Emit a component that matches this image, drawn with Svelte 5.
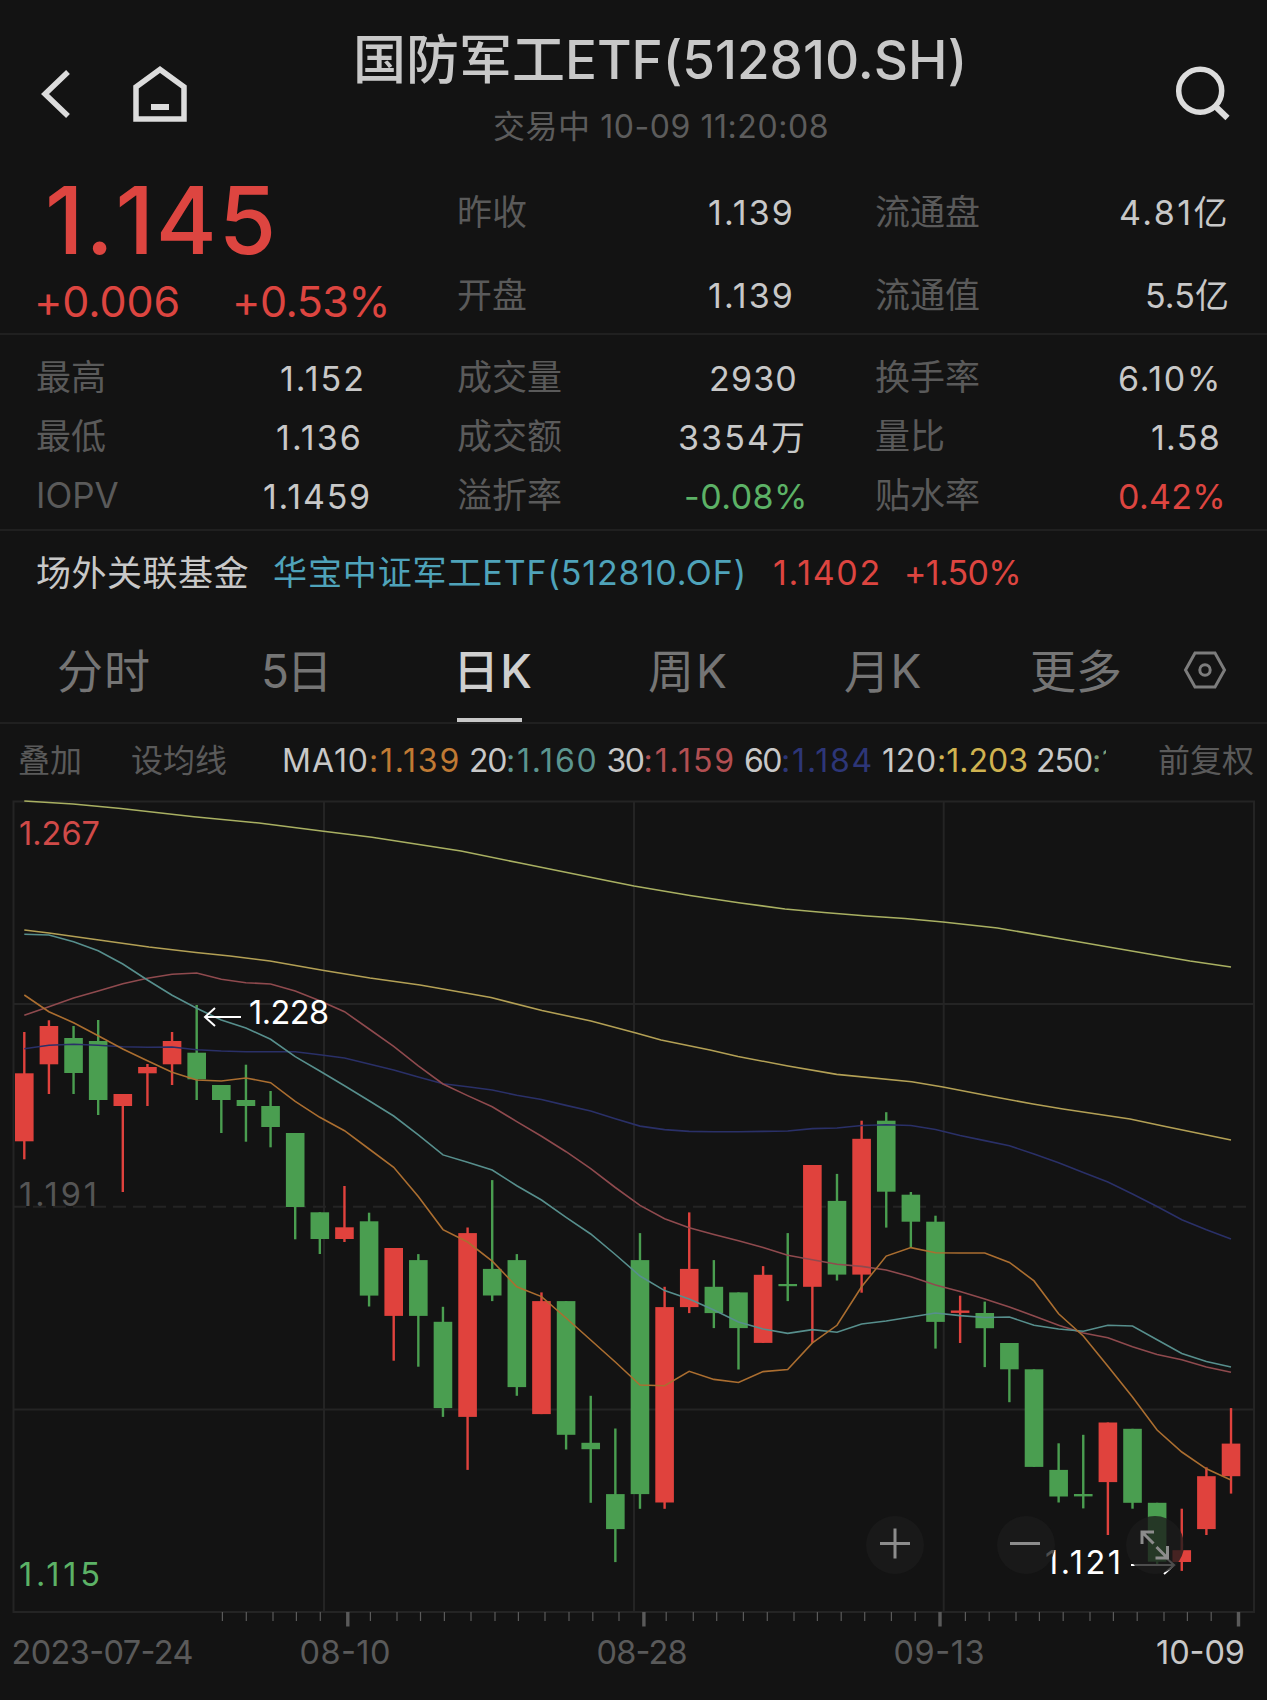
<script>
	// Spread the letters so the text takes up the given width
	function fit(node, width) {
		const natural = node.getBoundingClientRect().width
		const count = [...node.textContent].length
		node.style.letterSpacing = `${(width - natural) / count}px`
	}

	const quote = [
		{ label: '昨收', value: '1.139', width: 87, end: 80 },
		{ label: '流通盘', value: '4.81亿', width: 111, end: 37 },
		{ label: '开盘', value: '1.139', width: 87, end: 80 },
		{ label: '流通值', value: '5.5亿', width: 84, end: 38 }
	]

	const stats = [
		{ label: '最高', value: '1.152', width: 86, end: 91 },
		{ label: '成交量', value: '2930', width: 89, end: 77 },
		{ label: '换手率', value: '6.10%', width: 104, end: 45 },
		{ label: '最低', value: '1.136', width: 87, end: 94 },
		{ label: '成交额', value: '3354万', width: 129, end: 68 },
		{ label: '量比', value: '1.58', width: 70, end: 46 },
		{ label: 'IOPV', value: '1.1459', width: 109, end: 85 },
		{ label: '溢折率', value: '-0.08%', width: 124, end: 67, tone: 'down' },
		{ label: '贴水率', value: '0.42%', width: 108, end: 41, tone: 'up' }
	]

	const tabs = [
		{ label: '分时', width: 94, left: 57 },
		{ label: '5日', width: 69, left: 110 },
		{ label: '日K', width: 80, left: 123 },
		{ label: '周K', width: 81, left: 115 },
		{ label: '月K', width: 78, left: 115 },
		{ label: '更多', width: 92, left: 108 }
	]
	let active = $state('日K')

	const averages = [
		{ name: 'MA10', value: ':1.139', color: '#c07a34', nameWidth: 87, width: 92 },
		{ name: '20', value: ':1.160', color: '#5c9590', nameWidth: 37, width: 92.5 },
		{ name: '30', value: ':1.159', color: '#b24f52', nameWidth: 37, width: 92.5 },
		{ name: '60', value: ':1.184', color: '#2d3678', nameWidth: 37, width: 93 },
		{ name: '120', value: ':1.203', color: '#d0b350', nameWidth: 55, width: 91 },
		{ name: '250', value: ':1.2', color: '#7f9f78', nameWidth: 56, width: 54 }
	]

	const step = 24.627
	const firstX = 24.3
	const bodyWidth = 18.6

	// direction, body top, body bottom, high, low
	const candles = [
		['up', 1073.3, 1141.3, 1032, 1159.3],
		['up', 1026, 1064.3, 1020.3, 1094],
		['down', 1038, 1073, 1026, 1094],
		['down', 1041, 1100, 1020, 1115],
		['up', 1094, 1106, 1094, 1192],
		['up', 1067, 1073.3, 1064, 1106],
		['up', 1041, 1064.3, 1032, 1085],
		['down', 1052.7, 1079.3, 1005, 1100],
		['down', 1085, 1100, 1085, 1133],
		['down', 1100, 1106, 1064.7, 1141.7],
		['down', 1106, 1127, 1091, 1147.3],
		['down', 1133, 1207, 1133, 1239.3],
		['down', 1212.3, 1239, 1212.3, 1254],
		['up', 1227.3, 1239, 1186, 1242],
		['down', 1221.3, 1295.6, 1212.7, 1306.5],
		['up', 1248, 1315.9, 1248, 1360.7],
		['down', 1260.1, 1315.9, 1254.1, 1366.7],
		['down', 1321.8, 1408.1, 1306.8, 1416.9],
		['up', 1233.1, 1416.9, 1227.5, 1469.9],
		['down', 1268.9, 1295.5, 1180.1, 1301.1],
		['down', 1260.1, 1387.1, 1254.1, 1395.8],
		['up', 1301.1, 1414.1, 1292.4, 1414.1],
		['down', 1301.1, 1434.8, 1301.1, 1449.5],
		['down', 1442.8, 1449.2, 1395.8, 1502.8],
		['down', 1494.1, 1529.1, 1428.5, 1562.1],
		['down', 1260.1, 1494.1, 1233.1, 1508.8],
		['up', 1307.1, 1502.5, 1286.8, 1508.8],
		['up', 1268.9, 1307.1, 1212.4, 1313.1],
		['down', 1286.8, 1313.1, 1260.1, 1328.1],
		['down', 1292.4, 1328.1, 1292.4, 1369.5],
		['up', 1274.8, 1342.9, 1266.1, 1342.9],
		['down', 1284, 1286.2, 1233.1, 1301.1],
		['up', 1165, 1286.8, 1165, 1342.9],
		['down', 1200.9, 1274.6, 1173.9, 1280.5],
		['up', 1138.8, 1274.6, 1120.7, 1292.7],
		['down', 1120.7, 1191.7, 1112.2, 1227.6],
		['down', 1194.7, 1221.7, 1192, 1247.9],
		['down', 1221.7, 1321.9, 1215.7, 1348.6],
		['up', 1310.5, 1312.9, 1295.7, 1343],
		['down', 1313, 1328.2, 1301.6, 1367.1],
		['down', 1343, 1369.3, 1343, 1402.2],
		['down', 1369.3, 1466.9, 1369.3, 1466.9],
		['down', 1469.9, 1496.5, 1443.3, 1502.5],
		['down', 1494, 1496.4, 1434.8, 1508.4],
		['up', 1422.5, 1482.1, 1422.5, 1535],
		['down', 1428.8, 1502.8, 1428.8, 1508.7],
		['down', 1502.8, 1561.7, 1502.8, 1566],
		['up', 1550.2, 1562, 1508.7, 1570.9],
		['up', 1476.2, 1529.1, 1467.3, 1535],
		['up', 1443.6, 1476.2, 1408.1, 1493.6]
	].map(([dir, top, bottom, high, low], i) => ({ dir, top, bottom, high, low, x: firstX + i * step }))

	const ma10 = [995, 1011.7, 1022.7, 1035.7, 1049, 1060.7, 1072.3, 1080, 1081, 1078, 1082.7, 1101.3, 1117.3, 1130.7, 1149, 1167.3, 1196.6, 1229.6, 1242, 1261, 1286.8, 1296.6, 1318, 1340, 1362, 1385, 1385.7, 1371.3, 1379.4, 1382.5, 1371.6, 1369.5, 1342.9, 1325.3, 1286.8, 1256.1, 1247.6, 1252.7, 1253, 1253, 1262.4, 1280.9, 1313.8, 1336, 1366.3, 1397, 1430, 1452, 1468.8, 1479.9]
	const ma20 = [934.3, 935, 941.7, 950.7, 964, 980, 995.3, 1008.3, 1020, 1028, 1039.3, 1056.7, 1071, 1085.7, 1100.7, 1116, 1134.9, 1154.9, 1162.2, 1170, 1185.7, 1200, 1217.3, 1234, 1254.5, 1276, 1290.6, 1299, 1310, 1322, 1329, 1333.4, 1329.6, 1332.3, 1324, 1321, 1317, 1313, 1315.6, 1317.5, 1317, 1325.3, 1329, 1331.2, 1325.3, 1326, 1339.7, 1353.4, 1361.5, 1367]
	const ma30 = [1015.3, 1006.7, 998, 991, 983.7, 978.3, 974.3, 973, 979.3, 982.7, 984, 991, 1000.7, 1011.7, 1029, 1046.3, 1065.8, 1084, 1095.6, 1106.8, 1121.6, 1136.3, 1151.7, 1168.6, 1187.5, 1205.4, 1218.7, 1227.8, 1234.5, 1240.8, 1247.5, 1255.2, 1259.7, 1264.2, 1266.4, 1270, 1276.8, 1285, 1291.6, 1299, 1307, 1316, 1325.3, 1333, 1337.8, 1346.7, 1354.5, 1359.7, 1367, 1372.2]
	const ma60 = [1048.7, 1045.3, 1044.3, 1045.3, 1046.7, 1047.3, 1047, 1049.7, 1051, 1051.7, 1051.7, 1051.7, 1054.7, 1058, 1064, 1070, 1077, 1083.7, 1086.8, 1090, 1095.2, 1099.5, 1105.4, 1111, 1118.7, 1126.1, 1129.6, 1131.4, 1131.7, 1131.7, 1131.4, 1131, 1128.6, 1128, 1125.5, 1124.7, 1125.5, 1129.5, 1135.5, 1140.6, 1145.8, 1154, 1162.8, 1172.5, 1182, 1194, 1206.5, 1219.8, 1229.8, 1239]

	const toPoints = (ys) => ys.map((y, i) => `${(firstX + i * step).toFixed(1)},${y}`).join(' ')

	const lines = [
		{ color: '#a9b062', points: '24.3,801 73,804 121,808.5 194,816.7 259,823 323.5,831.3 372,837.3 461,851 520,863 606.5,880.5 634,886 690,895.5 740.5,903 785,909 824,912.5 867,916 905,918.5 943,922 997.5,928 1068,940 1149,954 1190,961 1231,967' },
		{ color: '#b3a055', points: '24.3,930 49,933 99,940 149,947 196,952.5 230,956 270,961 324,970.5 370,978 420,985 443,989 491,997.5 542,1010.5 591,1021 636,1033 661,1040 710,1050 738,1056.5 788,1066 836.7,1074.4 911.7,1081.8 943,1087 987,1095.5 1033,1104 1063,1109 1130,1119 1163,1126 1231,1140' },
		{ color: '#2a3068', points: toPoints(ma60) },
		{ color: '#8f4a4e', points: toPoints(ma30) },
		{ color: '#578f8d', points: toPoints(ma20) },
		{ color: '#ab6e30', points: toPoints(ma10) }
	]

	const majorTicks = [347.8, 643.9, 940, 1238.5]
	const ticks = [
		222.4, 246.3, 273, 296.4, 320.3, 370.4, 397, 420.5, 444.4, 471, 495, 518.4, 545, 569, 592.8, 619,
		666.2, 693.3, 716.7, 743.4, 767.3, 794, 817.4, 841.2, 864.7, 891.4, 915.2,
		965.4, 989.2, 1016, 1039.4, 1063.2, 1090, 1113.4, 1137.2, 1164, 1187.4, 1211.2
	]
</script>

<div class="screen">
	<header class="header">
		<nav class="nav">
			<svg width="160" height="70" viewBox="36 60 160 70" fill="none" stroke="#dcdcdc">
				<path d="M68 72 L45 94 L68 116" stroke-width="5.5" />
				<path d="M136 87 L160 69.5 L184 87 V119 H136 Z" stroke-width="5.5" />
				<path d="M151 107 H169" stroke-width="6" />
			</svg>
		</nav>
		<div class="heading">
			<h1 class="title"><span use:fit={614}>国防军工ETF(512810.SH)</span></h1>
			<div class="subtitle"><span use:fit={336}>交易中 10-09 11:20:08</span></div>
		</div>
		<svg class="search" width="60" height="60" viewBox="1172 64 60 60" fill="none" stroke="#dcdcdc">
			<circle cx="1199.2" cy="90.7" r="21.5" stroke-width="5.5" />
			<path d="M1214 106 L1226.5 118" stroke-width="6" />
		</svg>
	</header>

	<section class="quote">
		<div class="last">
			<div class="price up"><span use:fit={233}>1.145</span></div>
			<div class="change up">
				<span use:fit={146}>+0.006</span>
				<span use:fit={158}>+0.53%</span>
			</div>
		</div>
		<div class="quote-grid">
			{#each quote as item}
				<div class="stat" style="padding-right: {item.end}px">
					<span class="label">{item.label}</span>
					<span class="value" use:fit={item.width}>{item.value}</span>
				</div>
			{/each}
		</div>
	</section>

	<section class="stats">
		{#each stats as item}
			<div class="stat" style="padding-right: {item.end}px">
				<span class="label">{item.label}</span>
				<span class="value {item.tone ?? ''}" use:fit={item.width}>{item.value}</span>
			</div>
		{/each}
	</section>

	<section class="linked">
		<span class="linked-label" use:fit={213}>场外关联基金</span>
		<a class="linked-fund" href="#fund"><span use:fit={474}>华宝中证军工ETF(512810.OF)</span></a>
		<span class="linked-nav up" use:fit={109}>1.1402</span>
		<span class="up" use:fit={117}>+1.50%</span>
	</section>

	<nav class="tabs">
		{#each tabs as tab}
			<button
				class="tab"
				class:active={active === tab.label}
				style="margin-left: {tab.left}px; width: {tab.width}px"
				onclick={() => (active = tab.label)}
			>
				<span use:fit={tab.width}>{tab.label}</span>
			</button>
		{/each}
		<svg class="settings" width="46" height="44" viewBox="0 0 46 44" fill="none" stroke="#7c7c7c" stroke-width="3">
			<path d="M13 5 H33 L42.5 22 L33 39 H13 L3.5 22 Z" />
			<circle cx="23" cy="22" r="5.2" />
		</svg>
	</nav>

	<div class="indicators">
		<span class="muted overlay">叠加</span>
		<span class="muted set-ma">设均线</span>
		<div class="averages">
			{#each averages as ma}
				<span class="ma-name" use:fit={ma.nameWidth}>{ma.name}</span>
				<span class="ma-value" style="color: {ma.color}" use:fit={ma.width}>{ma.value}</span>
			{/each}
		</div>
		<span class="muted">前复权</span>
	</div>

	<svg class="chart" width="1267" height="910" viewBox="0 790 1267 910">
		<!-- grid -->
		<g fill="none" stroke="#242424" stroke-width="2">
			<rect x="13.5" y="801.5" width="1240.5" height="810.5" />
			<path d="M324 801 V1612 M634 801 V1612 M943.7 801 V1612" />
			<path d="M13 1004 H1254 M13 1409.5 H1254" />
			<path d="M13 1206.7 H1254" stroke-dasharray="13 7" />
		</g>

		<text class="axis up" x="19" y="845" textLength="81">1.267</text>
		<text class="axis mid" x="19" y="1206" textLength="78">1.191</text>
		<text class="axis down" x="19" y="1585.5" textLength="81">1.115</text>

		<!-- candles -->
		{#each candles as c}
			<g class={c.dir}>
				<rect x={c.x - 1.2} y={c.high} width="2.4" height={c.low - c.high} />
				<rect x={c.x - bodyWidth / 2} y={c.top} width={bodyWidth} height={c.bottom - c.top} />
			</g>
		{/each}

		<!-- moving averages -->
		{#each lines as line}
			<polyline points={line.points} fill="none" stroke={line.color} stroke-width="1.6" />
		{/each}

		<!-- high and low markers -->
		<g fill="none" stroke="#fff" stroke-width="2">
			<path d="M241 1017 H206 M215 1008 L205 1017 L215 1026" />
			<path d="M1131 1565 H1173 M1164 1556 L1174 1565 L1164 1574" />
		</g>
		<text class="mark" x="249" y="1023.5" textLength="80">1.228</text>
		<text class="mark" x="1045" y="1574" textLength="76">1.121</text>

		<!-- zoom controls -->
		<g class="control">
			<circle cx="895" cy="1545" r="29" />
			<path d="M880 1543.5 H910 M895 1528.5 V1558.5" />
		</g>
		<g class="control">
			<circle cx="1026" cy="1545" r="29" />
			<path d="M1010 1543.5 H1040" />
		</g>
		<g class="control">
			<circle cx="1155" cy="1545" r="29" />
			<path d="M1142 1544 V1532 H1154 M1142 1532 L1153.5 1543.5" />
			<path d="M1167.5 1546 V1558 H1155.5 M1167.5 1558 L1156.5 1547" />
		</g>

		<!-- time axis -->
		<g fill="#5a5a5a">
			{#each ticks as x}
				<rect x={x - 0.6} y="1612" width="1.2" height="9" />
			{/each}
			{#each majorTicks as x}
				<rect x={x - 1.7} y="1612" width="3.4" height="14.5" />
			{/each}
		</g>
		<text class="date" x="11.5" y="1663.5" textLength="182">2023-07-24</text>
		<text class="date" x="299.5" y="1663.5" textLength="91">08-10</text>
		<text class="date" x="596.5" y="1663.5" textLength="91">08-28</text>
		<text class="date" x="893.5" y="1663.5" textLength="91">09-13</text>
		<text class="date today" x="1156" y="1663.5" textLength="89">10-09</text>
	</svg>
</div>

<style>
	:global(body) {
		background: #131313;
	}
	.screen {
		width: 1267px;
		height: 1700px;
		overflow: hidden;
		display: flex;
		flex-direction: column;
		background: #131313;
		color: #c8c8c8;
		font-family: Inter, 'Noto Sans CJK SC', sans-serif;
		font-size: 34px;
		line-height: 40px;
		white-space: nowrap;
	}
	.up { color: #dd4540; fill: #e0423d; }
	.down { color: #5cb266; fill: #4a9e50; }

	/* ── Header ───────────────────────────────────────────────── */
	.header {
		display: flex;
		height: 147px;
		flex-shrink: 0;
	}
	.nav {
		width: 317px;
		padding: 60px 0 0 36px;
		box-sizing: border-box;
	}
	.heading {
		width: 614px;
		margin-left: 36px;
		padding-top: 30px;
		text-align: center;
	}
	.title {
		margin: 0 0 17px;
		font-size: 53px;
		font-weight: 500;
		line-height: 60px;
	}
	.subtitle {
		padding-left: 2px;
		font-size: 32px;
		line-height: 40px;
		color: #5c5c5c;
	}
	.search {
		margin: 64px 34px 0 auto;
	}

	/* ── Quote ────────────────────────────────────────────────── */
	.quote {
		display: flex;
		height: 186px;
		flex-shrink: 0;
		border-bottom: 2px solid #202020;
	}
	.last {
		width: 457px;
		padding-top: 28px;
	}
	.price {
		padding-left: 45px;
		font-size: 93px;
		font-weight: 500;
		font-kerning: none;
		line-height: 90px;
		margin-bottom: 11px;
	}
	.change {
		display: flex;
		gap: 52px;
		padding-left: 34px;
		font-size: 43px;
		line-height: 50px;
	}
	.quote-grid {
		flex: 1;
		display: grid;
		grid-template-columns: 418px 392px;
		grid-auto-rows: 50px;
		row-gap: 33px;
		padding-top: 41px;
	}
	.stat {
		display: flex;
		justify-content: space-between;
		align-items: center;
	}
	.label {
		padding-bottom: 3px;
		color: #5a5a5a;
		font-size: 35px;
		line-height: 38px;
	}

	.stats {
		display: grid;
		grid-template-columns: 421px 418px 392px;
		grid-auto-rows: 59px;
		height: 180px;
		flex-shrink: 0;
		padding: 14px 0 0 36px;
		border-bottom: 2px solid #202020;
	}

	/* ── Linked fund ──────────────────────────────────────────── */
	.linked {
		display: flex;
		align-items: center;
		height: 84px;
		flex-shrink: 0;
		padding-left: 36px;
	}
	.linked-label { font-size: 35px; }
	.linked-fund {
		margin: 0 26px 0 24px;
		color: #4fa3ba;
		text-decoration: none;
	}
	.linked-nav { margin-right: 22px; }

	/* ── Tabs ─────────────────────────────────────────────────── */
	.tabs {
		display: flex;
		height: 107px;
		flex-shrink: 0;
		border-bottom: 2px solid #202020;
	}
	.tab {
		position: relative;
		padding: 6px 0 0;
		border: 0;
		background: none;
		color: #757575;
		font: inherit;
		font-size: 46px;
		line-height: 101px;
		text-align: left;
		cursor: pointer;
	}
	.tab.active {
		color: #cfcfcf;
		font-weight: 500;
	}
	.tab.active::after {
		content: '';
		position: absolute;
		left: 4px;
		bottom: 0;
		width: 65px;
		height: 4px;
		background: #c8c8c8;
	}
	.settings {
		margin: 33px 0 0 60px;
	}

	/* ── Indicator bar ────────────────────────────────────────── */
	.indicators {
		display: flex;
		align-items: center;
		height: 66px;
		padding: 8px 0 0 18px;
		box-sizing: border-box;
		flex-shrink: 0;
		font-size: 32px;
	}
	.muted { color: #5a5a5a; }
	.overlay { margin-right: 49px; }
	.set-ma { margin-right: 55px; }
	.averages {
		display: flex;
		width: 824px;
		margin-right: 52px;
		overflow: hidden;
	}
	.averages span { flex-shrink: 0; }
	.ma-value { margin-right: 8px; }

	/* ── Chart ────────────────────────────────────────────────── */
	.chart {
		display: block;
		flex-shrink: 0;
	}
	.axis, .mark, .date { font-size: 32.5px; }
	.axis.up { fill: #d04a48; }
	.axis.down { fill: #5cb266; }
	.axis.mid { fill: #555; }
	.mark { fill: #fff; }
	.date { fill: #5a5a5a; }
	.date.today { fill: #c8c8c8; }
	.control circle {
		fill: #1b1b1b;
		fill-opacity: 0.78;
	}
	.control path {
		fill: none;
		stroke: #8c8c8c;
		stroke-width: 3;
	}
</style>
